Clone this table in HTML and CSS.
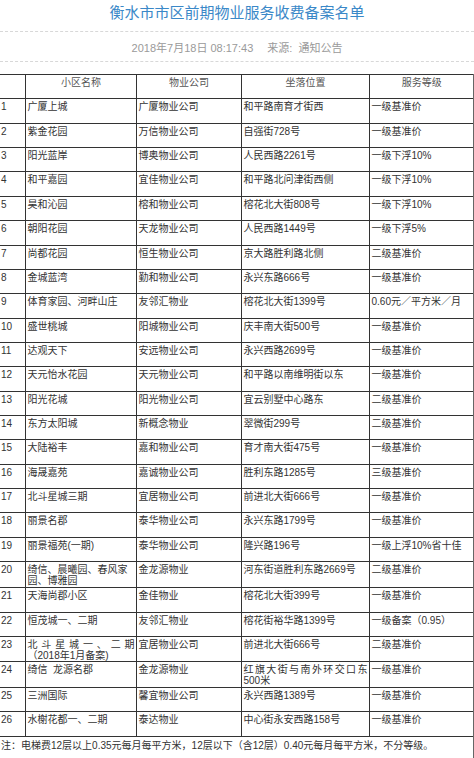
FILE: index.html
```html
<!DOCTYPE html>
<html lang="zh-CN">
<head>
<meta charset="utf-8">
<title>衡水市市区前期物业服务收费备案名单</title>
<link rel="stylesheet" href="styles.css">
</head>
<body>
<div class="page">
  <h1 class="title">衡水市市区前期物业服务收费备案名单</h1>
  <div class="meta">2018年7月18日 08:17:43<span class="gap"></span>来源:&nbsp; 通知公告</div>
  <table class="list">
    <colgroup>
      <col class="c1"><col class="c2"><col class="c3"><col class="c4"><col class="c5">
    </colgroup>
    <thead>
      <tr><th></th><th>小区名称</th><th>物业公司</th><th>坐落位置</th><th>服务等级</th></tr>
    </thead>
    <tbody>
      <tr><td>1</td><td>广厦上城</td><td>广厦物业公司</td><td>和平路南育才街西</td><td>一级基准价</td></tr>
      <tr><td>2</td><td>紫金花园</td><td>万信物业公司</td><td>自强街728号</td><td>一级基准价</td></tr>
      <tr><td>3</td><td>阳光蓝岸</td><td>博奥物业公司</td><td>人民西路2261号</td><td>一级下浮10%</td></tr>
      <tr><td>4</td><td>和平嘉园</td><td>宜佳物业公司</td><td>和平路北问津街西侧</td><td>一级下浮10%</td></tr>
      <tr><td>5</td><td>昊和沁园</td><td>榕和物业公司</td><td>榕花北大街808号</td><td>一级下浮10%</td></tr>
      <tr><td>6</td><td>朝阳花园</td><td>天龙物业公司</td><td>人民西路1449号</td><td>一级下浮5%</td></tr>
      <tr><td>7</td><td>尚都花园</td><td>恒生物业公司</td><td>京大路胜利路北侧</td><td>二级基准价</td></tr>
      <tr><td>8</td><td>金城蓝湾</td><td>勤和物业公司</td><td>永兴东路666号</td><td>一级基准价</td></tr>
      <tr><td>9</td><td>体育家园、河畔山庄</td><td>友邻汇物业</td><td>榕花北大街1399号</td><td>0.60元／平方米／月</td></tr>
      <tr><td>10</td><td>盛世桃城</td><td>阳城物业公司</td><td>庆丰南大街500号</td><td>一级基准价</td></tr>
      <tr><td>11</td><td>达观天下</td><td>安远物业公司</td><td>永兴西路2699号</td><td>一级基准价</td></tr>
      <tr><td>12</td><td>天元怡水花园</td><td>天元物业公司</td><td>和平路以南维明街以东</td><td>一级基准价</td></tr>
      <tr><td>13</td><td>阳光花城</td><td>阳光物业公司</td><td>宜云别墅中心路东</td><td>二级基准价</td></tr>
      <tr><td>14</td><td>东方太阳城</td><td>新概念物业</td><td>翠微街299号</td><td>二级基准价</td></tr>
      <tr><td>15</td><td>大陆裕丰</td><td>嘉和物业公司</td><td>育才南大街475号</td><td>一级基准价</td></tr>
      <tr><td>16</td><td>海晟嘉苑</td><td>嘉诚物业公司</td><td>胜利东路1285号</td><td>三级基准价</td></tr>
      <tr><td>17</td><td>北斗星城三期</td><td>宜居物业公司</td><td>前进北大街666号</td><td>一级基准价</td></tr>
      <tr><td>18</td><td>丽景名郡</td><td>泰华物业公司</td><td>永兴东路1799号</td><td>一级基准价</td></tr>
      <tr><td>19</td><td>丽景福苑(一期)</td><td>泰华物业公司</td><td>隆兴路196号</td><td>一级上浮10%省十佳</td></tr>
      <tr class="tall"><td>20</td><td>绮信、晨曦园、春风家园、博雅园</td><td>金龙源物业</td><td>河东街道胜利东路2669号</td><td>二级基准价</td></tr>
      <tr><td>21</td><td>天海尚郡小区</td><td>金佳物业</td><td>榕花北大街399号</td><td>一级基准价</td></tr>
      <tr><td>22</td><td>恒茂城一、二期</td><td>友邻汇物业</td><td>榕花街裕华路1399号</td><td>一级备案（0.95）</td></tr>
      <tr><td>23</td><td><span class="spread">北斗星城一、二期</span>（2018年1月备案)</td><td>宜居物业公司</td><td>前进北大街666号</td><td>二级基准价</td></tr>
      <tr class="tall"><td>24</td><td>绮信&nbsp;&nbsp;龙源名郡</td><td>金龙源物业</td><td><span class="spread">红旗大街与南外环交口东</span>500米</td><td>一级基准价</td></tr>
      <tr><td>25</td><td>三洲国际</td><td>馨宜物业公司</td><td>永兴西路1389号</td><td>一级基准价</td></tr>
      <tr><td>26</td><td>水榭花都一、二期</td><td>泰达物业</td><td>中心街永安西路158号</td><td>一级基准价</td></tr>
      <tr class="note"><td colspan="5">注：电梯费12层以上0.35元每月每平方米，12层以下（含12层）0.40元每月每平方米，不分等级。</td></tr>
    </tbody>
  </table>
</div>
</body>
</html>
```

FILE: styles.css
```css
html, body {
  margin: 0;
  padding: 0;
  background: #fff;
}

.page {
  width: 474px;
  font-family: "Liberation Sans", "Noto Sans CJK SC", sans-serif;
  color: #333;
}

.title {
  margin: 0;
  padding-top: 3px;
  height: 20px;
  line-height: 20px;
  font-size: 15px;
  font-weight: normal;
  text-align: center;
  color: #3a88c8;
  margin-bottom: 8px;
}

.meta {
  border-top: 1px dashed #d8d8d8;
  border-bottom: 1px dashed #d8d8d8;
  padding: 8px 0 5px;
  line-height: 16px;
  font-size: 11px;
  text-align: center;
  color: #9a9a9a;
}

.meta .gap {
  display: inline-block;
  width: 14px;
}

.list {
  margin-top: 12px;
  width: 474px;
  table-layout: fixed;
  border-collapse: collapse;
  font-size: 10px;
  line-height: 11px;
  border-right: 2px solid #666;
  border-bottom: 3px solid #888;
}

.c1 { width: 25px; }
.c2 { width: 111px; }
.c3 { width: 105px; }
.c4 { width: 128px; }
.c5 { width: 105px; }

.list th,
.list td {
  border: 1px solid #333;
  height: 24.37px;
  padding: 2px 1px 0 2px;
  vertical-align: top;
  text-align: left;
  box-sizing: border-box;
  overflow: hidden;
}

.list .tall td {
  height: 26px;
}

.list th:first-child,
.list td:first-child {
  border-left: none;
  padding-left: 1px;
}

.list th {
  font-weight: normal;
  text-align: center;
  color: #555;
}

.spread {
  display: block;
  text-align: justify;
  text-align-last: justify;
}

.note td {
  padding-top: 3px;
}
```
